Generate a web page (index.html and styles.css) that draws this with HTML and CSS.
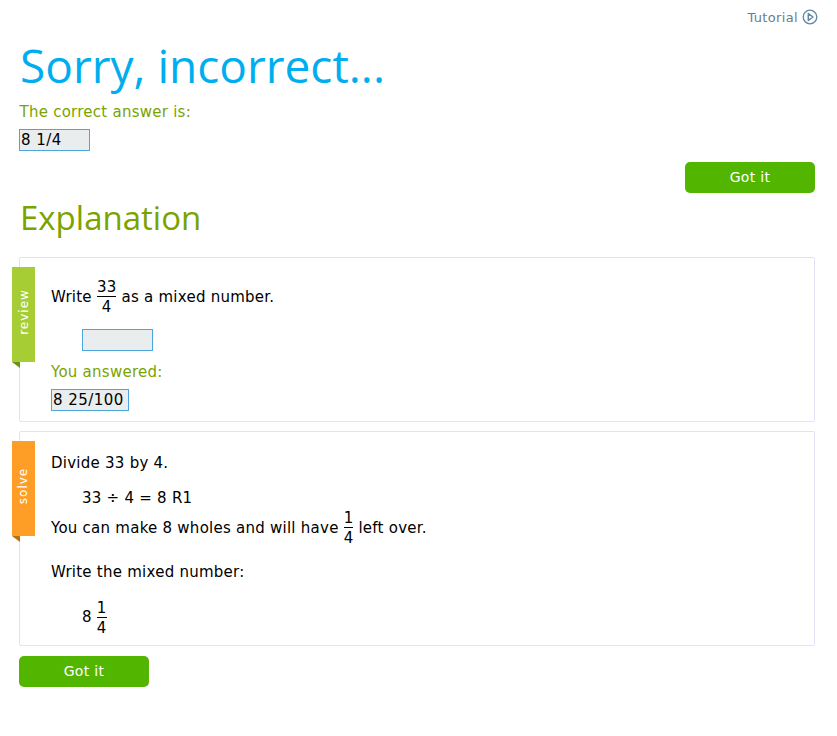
FILE: index.html
```html
<!DOCTYPE html>
<html lang="en">
<head>
<meta charset="utf-8">
<title>Sorry, incorrect</title>
<link rel="stylesheet" href="styles.css">
</head>
<body>
<main class="page">
  <div class="tutorial-row">
    <span class="tutorial">Tutorial</span>
    <svg class="tutorial-icon" width="16" height="16" viewBox="0 0 16 16"><circle cx="8" cy="8" r="6.8" fill="none" stroke="#5f8aa3" stroke-width="1.3"/><path d="M6.3 4.6 L11 8 L6.3 11.4 Z" fill="none" stroke="#5f8aa3" stroke-width="1.5" stroke-linejoin="round"/></svg>
  </div>
  <h1 class="title">Sorry, incorrect...</h1>
  <p class="answer-label">The correct answer is:</p>
  <div class="answer-box wide">8 1/4</div>
  <div class="button-row"><button class="btn">Got it</button></div>
  <h2 class="subtitle">Explanation</h2>

  <section class="card card-review">
    <div class="ribbon ribbon-review"><span>review</span></div>
    <div class="line">Write <span class="frac"><span class="num">33</span><span class="den">4</span></span> as a mixed number.</div>
    <div class="answer-box wide empty indent"></div>
    <p class="answered">You answered:</p>
    <div class="answer-box">8 25/100</div>
  </section>

  <section class="card card-solve">
    <div class="ribbon ribbon-solve"><span>solve</span></div>
    <div class="plain">Divide 33 by 4.</div>
    <div class="plain indent calc">33 ÷ 4 = 8 R1</div>
    <div class="line made">You can make 8 wholes and will have <span class="frac"><span class="num">1</span><span class="den">4</span></span> left over.</div>
    <div class="plain write">Write the mixed number:</div>
    <div class="line indent mixed">8 <span class="frac"><span class="num">1</span><span class="den">4</span></span></div>
  </section>

  <button class="btn btn-bottom">Got it</button>
</main>
</body>
</html>
```
FILE: styles.css
```css
* { box-sizing: border-box; }
html, body { margin: 0; padding: 0; background: #fff; }
body { font-family: "DejaVu Sans", Verdana, sans-serif; font-size: 15px; letter-spacing: .25px; color: #000; }
.page { padding: 8px 22px 49px 19px; }
.tutorial-row { display: flex; justify-content: flex-end; align-items: center; gap: 4px; height: 18px; margin-right: -3px; }
.tutorial { font-size: 13px; letter-spacing: .35px; color: #6b7c8c; }
.title { margin: 13px 0 0 1px; font: 400 46px/52px "Open Sans", "Noto Sans", sans-serif; letter-spacing: 0; color: #00aeef; }
.answer-label { margin: 11px 0 0 .5px; line-height: 20px; color: #7ba300; }
.answer-box { display: block; width: max-content; height: 22px; margin-top: 7px; padding: 0 4px 0 1px; border: 1px solid #4ba6dd; background: #e9edee; line-height: 21px; letter-spacing: .45px; }
.answer-box.wide { width: 71px; }
.button-row { display: flex; justify-content: flex-end; margin-top: 11px; }
.btn { display: block; width: 130px; height: 31px; padding: 0; border: 0; border-radius: 5px; background: #52b600; color: #fff; font: 14px/31px "DejaVu Sans", Verdana, sans-serif; letter-spacing: .3px; }
.subtitle { margin: 4px 0 0 1px; font: 400 33px/42px "Open Sans", "Noto Sans", sans-serif; letter-spacing: 0; color: #7ba300; }
.card { position: relative; border: 1px solid #e2e2f6; border-radius: 2px; padding: 0 31px; }
.card-review { margin-top: 18px; height: 165px; padding-top: 18px; }
.card-solve { margin-top: 9px; height: 215px; padding-top: 21px; }
.ribbon { position: absolute; left: -8px; top: 9px; width: 23px; height: 95px; padding-bottom: 5px; display: flex; align-items: center; justify-content: center; color: #fff; font-size: 12px; letter-spacing: 1px; }
.ribbon span { transform: rotate(-90deg); white-space: nowrap; }
.ribbon::after { content: ""; position: absolute; left: 0; top: 95px; border-style: solid; border-width: 0 8px 6px 0; border-color: transparent; }
.ribbon-review { background: #a6ce34; }
.ribbon-review::after { border-right-color: #6f8f1a; }
.ribbon-solve { background: #ff9e27; }
.ribbon-solve::after { border-right-color: #bd6f0e; }
.line { display: flex; align-items: center; line-height: 20px; white-space: pre; }
.frac { display: inline-flex; flex-direction: column; align-items: center; margin-top: 2px; }
.num { line-height: 18px; border-bottom: 1px solid #000; }
.den { line-height: 20px; }
.indent { margin-left: 31px; }
.answer-box.indent { margin-top: 12px; }
.answered { margin: 11px 0 0; line-height: 20px; color: #7ba300; }
.card-review .answer-box:last-child { margin-top: 7px; }
.plain { line-height: 20px; }
.calc { margin-top: 15px; }
.made { margin-top: -1px; }
.write { margin-top: 14px; }
.mixed { margin-top: 13px; }
.mixed .frac { margin-top: 4px; }
.btn-bottom { margin-top: 10px; }
```
